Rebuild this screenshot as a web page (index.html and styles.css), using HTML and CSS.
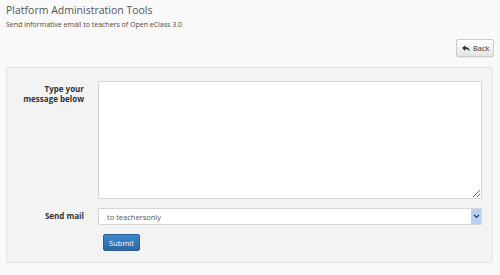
FILE: index.html
```html
<!DOCTYPE html>
<html lang="en">
<head>
    <meta charset="UTF-8">
    <title>Platform Administration Tools</title>
    <link rel="stylesheet" href="styles.css">
</head>
<body>
    <div class="page">
        <h1 class="page-title">Platform Administration Tools</h1>
        <p class="page-subtitle">Send informative email to teachers of Open eClass 3.0</p>

        <div class="toolbar">
            <button class="btn-back">
                <svg class="icon-reply" viewBox="0 0 10 8" width="8" height="7">
                    <path d="M0 3.5 L4 0 L4 2 C7.5 2 9.5 4 10 8 C8.5 5.5 7 5 4 5 L4 7 Z" fill="#333"/>
                </svg>
                Back
            </button>
        </div>

        <!-- mail form -->
        <form class="panel">
            <label class="form-label" for="body_mail">Type your message below</label>
            <textarea id="body_mail" class="form-textarea"></textarea>

            <label class="form-label" for="sendTo">Send mail</label>
            <div class="select-wrap">
                <select id="sendTo" class="form-select">
                    <option>to teachersonly</option>
                    <option>to all users</option>
                </select>
                <span class="select-arrow">
                    <svg viewBox="0 0 8 6" width="7" height="5">
                        <path d="M1 1 L4 4 L7 1" fill="none" stroke="#2a3a55" stroke-width="1.5"/>
                    </svg>
                </span>
            </div>

            <div></div>
            <div>
                <input type="submit" class="btn-submit" value="Submit">
            </div>
        </form>
    </div>
</body>
</html>
```

FILE: styles.css
```css
body {
    margin: 0;
    background: #f9f9f9;
    font-family: 'Open Sans', 'DejaVu Sans', sans-serif;
    color: #555;
}
.page {
    padding: 3px 7px 0 6px;
}
.page-title {
    margin: 0;
    font-size: 10.5px;
    font-weight: normal;
    line-height: 15px;
    color: #555;
}
.page-subtitle {
    margin: 2px 0 0;
    font-size: 7px;
    line-height: 10px;
    color: #4a4a4a;
}
.toolbar {
    display: flex;
    justify-content: flex-end;
    margin-top: 9px;
    margin-right: -1px;
}
.btn-back {
    display: flex;
    align-items: center;
    gap: 3px;
    height: 18px;
    width: 38px;
    padding: 0 0 0 5px;
    font-family: 'Open Sans', 'DejaVu Sans', sans-serif;
    font-size: 7.5px;
    color: #333;
    background: linear-gradient(#fff, #e4e4e4);
    border: 1px solid #ccc;
    border-radius: 2px;
    box-shadow: 0 1px 1px rgba(0, 0, 0, 0.06);
}
.panel {
    display: grid;
    grid-template-columns: 77px 1fr;
    column-gap: 14px;
    row-gap: 9px;
    margin: 10px 0 0;
    padding: 13px 10px 11px 0;
    background: #f3f3f3;
    border: 1px solid #e3e3e3;
    border-radius: 3px;
}
.form-label {
    padding: 3px 0 0 14px;
    text-align: right;
    font-size: 8px;
    font-weight: bold;
    line-height: 10px;
    color: #333;
}
.form-textarea {
    display: block;
    box-sizing: border-box;
    width: 100%;
    height: 118px;
    margin: 0;
    background: #fff;
    border: 1px solid #d6d6d6;
    border-radius: 1px;
    resize: vertical;
}
.select-wrap {
    position: relative;
    height: 17px;
}
.form-select {
    display: block;
    appearance: none;
    box-sizing: border-box;
    width: 100%;
    height: 17px;
    margin: 0;
    padding: 0 0 0 8px;
    font-family: 'Open Sans', 'DejaVu Sans', sans-serif;
    font-size: 7.5px;
    color: #555;
    background: #fff;
    border: 1px solid #d6d6d6;
    border-radius: 1px;
}
.select-arrow {
    position: absolute;
    top: 1px;
    right: 1px;
    width: 10px;
    height: 15px;
    display: flex;
    align-items: center;
    justify-content: center;
    background: #b9d0f8;
    pointer-events: none;
}
.btn-submit {
    display: block;
    margin-left: 5px;
    height: 17px;
    width: 37px;
    padding: 0;
    font-family: 'Open Sans', 'DejaVu Sans', sans-serif;
    font-size: 7.5px;
    color: #fff;
    background: linear-gradient(#3c88cb, #2c68a3);
    border: 1px solid #2a5f95;
    border-radius: 2px;
}
```
